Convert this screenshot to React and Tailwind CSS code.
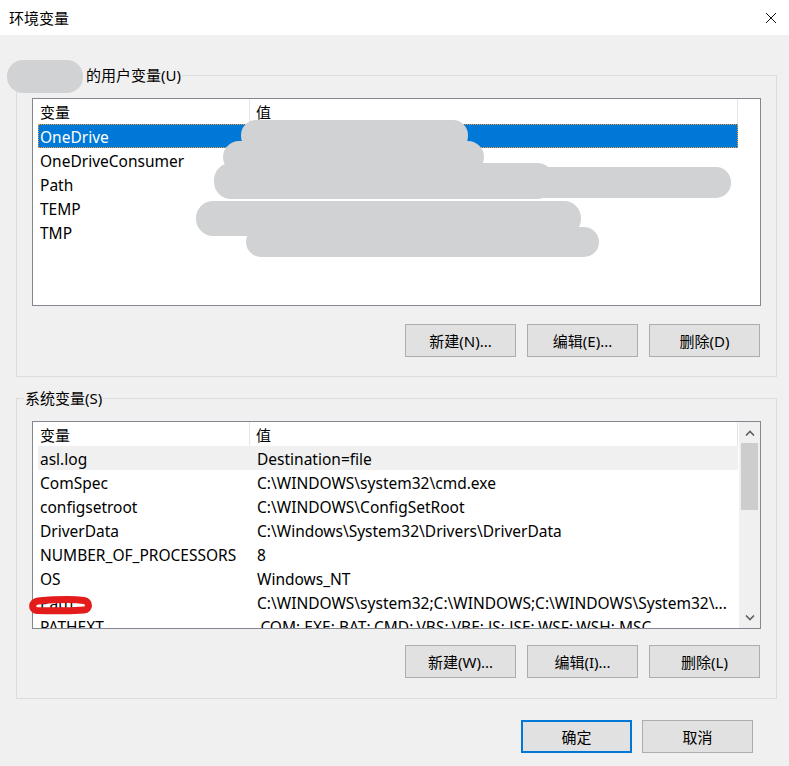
import React from "react";

const sysVars = [
    { name: "asl.log", value: "Destination=file", hover: true },
    { name: "ComSpec", value: "C:\\WINDOWS\\system32\\cmd.exe" },
    { name: "configsetroot", value: "C:\\WINDOWS\\ConfigSetRoot" },
    { name: "DriverData", value: "C:\\Windows\\System32\\Drivers\\DriverData" },
    { name: "NUMBER_OF_PROCESSORS", value: "8" },
    { name: "OS", value: "Windows_NT" },
    { name: "Path", value: "C:\\WINDOWS\\system32;C:\\WINDOWS;C:\\WINDOWS\\System32\\..." },
    { name: "PATHEXT", value: ".COM;.EXE;.BAT;.CMD;.VBS;.VBE;.JS;.JSE;.WSF;.WSH;.MSC" },
];

const userVars = ["OneDrive", "OneDriveConsumer", "Path", "TEMP", "TMP"];

function Button({ label, primary }) {
    return (
        <button
            className={`w-[111px] h-[33px] bg-[#e1e1e1] text-[15px] text-black flex items-center justify-center ${primary ? "border-2 border-[#0078d7]" : "border border-[#adadad]"}`}
        >
            {label}
        </button>
    );
}

function Header() {
    return (
        <div className="flex h-[25px] w-[705px] items-center bg-white">
            <div className="w-[217px] h-full pl-[7px] flex items-center border-r border-[#e5e5e5]">变量</div>
            <div className="flex-1 h-full pl-[6px] flex items-center border-r border-[#e5e5e5]">值</div>
        </div>
    );
}

function Row({ name, value, selected, hover }) {
    let cls = "border border-transparent";
    if (selected) cls = "bg-[#0078d7] text-white border border-dotted border-[#f29a3a]";
    else if (hover) cls = "bg-[#f0f0f0] border border-transparent";
    return (
        <div className={`ml-[5px] w-[700px] h-[24px] flex items-center whitespace-nowrap text-[15.5px] ${cls}`}>
            <div className="w-[218px] pl-[1px] pt-[2px] shrink-0">{name}</div>
            <div className="flex-1 pt-[2px] overflow-hidden">{value}</div>
        </div>
    );
}

function Chevron({ up }) {
    return (
        <svg width="10" height="6" viewBox="0 0 10 6">
            <path d={up ? "M1 5.5 L5 1.5 L9 5.5" : "M1 0.5 L5 4.5 L9 0.5"} fill="none" stroke="#606060" strokeWidth="1.6" />
        </svg>
    );
}

export default function App() {
    return (
        <div className="w-[789px] h-[766px] bg-[#f0f0f0] overflow-hidden text-black text-[15px] leading-[20px] font-['Noto_Sans','Noto_Sans_CJK_SC',sans-serif]">
            <div className="h-[35px] bg-white flex items-center justify-between pl-[9px] pr-[12px]">
                <span>环境变量</span>
                <svg width="12" height="12" viewBox="0 0 12 12">
                    <path d="M1 1 L11 11 M11 1 L1 11" stroke="#111" strokeWidth="1" />
                </svg>
            </div>

            <div className="pl-[16px] pr-[12px] pt-[30px]">
                {/* user vars */}
                <fieldset className="border border-[#dcdcdc] p-0 m-0 min-w-0">
                    <legend className="ml-[7px] px-[1px] h-[20px] leading-[20px]">
                        <span className="relative inline-block w-[61px] h-[20px] align-top">
                            <span className="absolute left-[-18px] top-[-5px] w-[76px] h-[33px] rounded-[16px] bg-[#d1d2d4]"></span>
                        </span>
                        的用户变量(U)
                    </legend>
                    <div className="px-[15px] pt-[13px] pb-[19px]">
                        <div className="relative w-[729px] h-[208px] border border-[#828790] bg-white">
                            <Header />
                            {userVars.map((v, i) => (
                                <Row key={v} name={v} value="" selected={i === 0} />
                            ))}
                            <div className="absolute left-[208px] top-[21px] w-[227px] h-[31px] rounded-[15px] bg-[#d1d2d4]"></div>
                            <div className="absolute left-[190px] top-[42px] w-[261px] h-[32px] rounded-[16px] bg-[#d1d2d4]"></div>
                            <div className="absolute left-[181px] top-[64px] w-[340px] h-[36px] rounded-[17px] bg-[#d1d2d4]"></div>
                            <div className="absolute left-[400px] top-[68px] w-[298px] h-[31px] rounded-[15px] bg-[#d1d2d4]"></div>
                            <div className="absolute left-[163px] top-[102px] w-[385px] h-[35px] rounded-[17px] bg-[#d1d2d4]"></div>
                            <div className="absolute left-[213px] top-[128px] w-[353px] h-[30px] rounded-[15px] bg-[#d1d2d4]"></div>
                        </div>
                        <div className="flex justify-end gap-[11px] mt-[18px] pr-[1px]">
                            <Button label="新建(N)..." />
                            <Button label="编辑(E)..." />
                            <Button label="删除(D)" />
                        </div>
                    </div>
                </fieldset>

                {/* system vars */}
                <fieldset className="border border-[#dcdcdc] p-0 m-0 mt-[11px] min-w-0">
                    <legend className="ml-[7px] px-[1px] h-[20px] leading-[20px]">系统变量(S)</legend>
                    <div className="px-[15px] pt-[13px] pb-[20px]">
                        <div className="relative w-[729px] h-[208px]">
                            <div className="w-full h-full border border-[#828790] bg-white flex overflow-hidden">
                                <div className="w-[706px] overflow-hidden">
                                    <div className="h-[24px] overflow-hidden"><Header /></div>
                                    {sysVars.map((v) => (
                                        <Row key={v.name} name={v.name} value={v.value} hover={v.hover} />
                                    ))}
                                </div>
                                <div className="w-[21px] h-full bg-[#f0f0f0] flex flex-col items-center">
                                    <div className="h-[21px] flex items-center justify-center"><Chevron up /></div>
                                    <div className="w-[17px] h-[67px] bg-[#cdcdcd]"></div>
                                    <div className="flex-1"></div>
                                    <div className="h-[21px] flex items-center justify-center"><Chevron /></div>
                                </div>
                            </div>
                            <svg className="absolute left-[-4px] top-[174px]" width="66" height="22" viewBox="0 0 66 22">
                                <path d="M10 6 C 28 4.5, 48 4.5, 56 5.5 C 62 6.5, 62 14.5, 56 15 C 40 16, 22 16, 9 15.5 C 3 15, 3 7, 10 6 Z" fill="none" stroke="#e31b1b" strokeWidth="7" strokeLinejoin="round" />
                            </svg>
                        </div>
                        <div className="flex justify-end gap-[11px] mt-[16px] pr-[1px]">
                            <Button label="新建(W)..." />
                            <Button label="编辑(I)..." />
                            <Button label="删除(L)" />
                        </div>
                    </div>
                </fieldset>

                <div className="flex justify-end gap-[10px] mt-[21px] pr-[24px]">
                    <Button label="确定" primary />
                    <Button label="取消" />
                </div>
            </div>
        </div>
    );
}
